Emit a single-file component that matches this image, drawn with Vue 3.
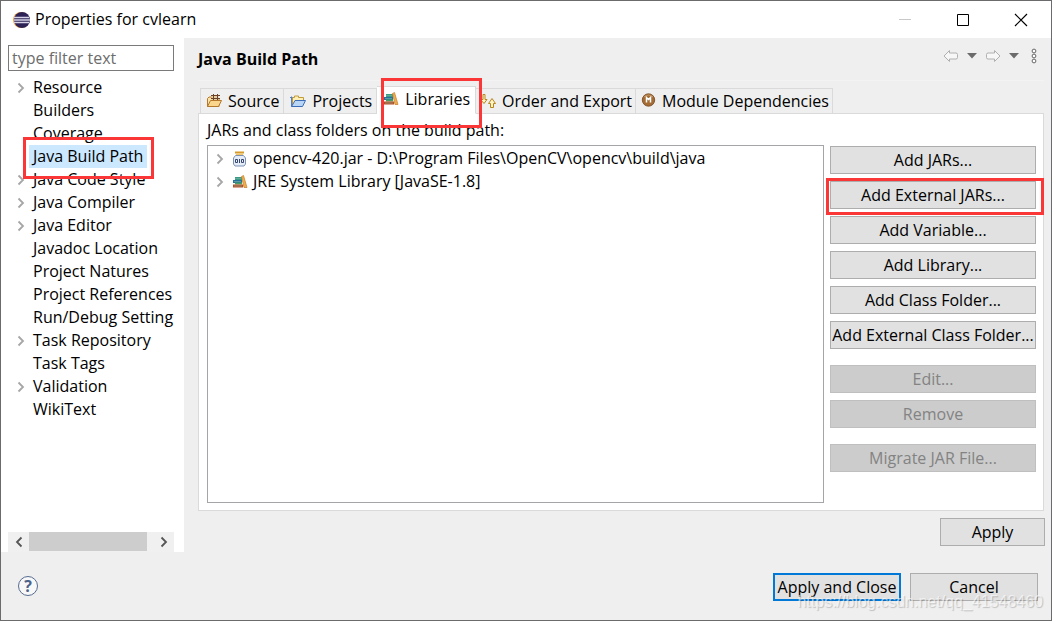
<script setup>
import { ref } from 'vue'

const filter = ref('')
const categories = [
  { label: 'Resource', open: true },
  { label: 'Builders' },
  { label: 'Coverage' },
  { label: 'Java Build Path', selected: true },
  { label: 'Java Code Style', open: true },
  { label: 'Java Compiler', open: true },
  { label: 'Java Editor', open: true },
  { label: 'Javadoc Location' },
  { label: 'Project Natures' },
  { label: 'Project References' },
  { label: 'Run/Debug Setting' },
  { label: 'Task Repository', open: true },
  { label: 'Task Tags' },
  { label: 'Validation', open: true },
  { label: 'WikiText' }
]
const tabs = [
  { label: 'Source', icon: 'source' },
  { label: 'Projects', icon: 'projects' },
  { label: 'Libraries', icon: 'books', selected: true },
  { label: 'Order and Export', icon: 'order' },
  { label: 'Module Dependencies', icon: 'module' }
]
const entries = [
  { label: 'opencv-420.jar - D:\\Program Files\\OpenCV\\opencv\\build\\java', icon: 'jar' },
  { label: 'JRE System Library [JavaSE-1.8]', icon: 'books' }
]
const actions = [
  { label: 'Add JARs...' },
  { label: 'Add External JARs...', marked: true },
  { label: 'Add Variable...' },
  { label: 'Add Library...' },
  { label: 'Add Class Folder...' },
  { label: 'Add External Class Folder...' },
  { label: 'Edit...', disabled: true, spaced: true },
  { label: 'Remove', disabled: true },
  { label: 'Migrate JAR File...', disabled: true, spaced: true }
]
</script>

<template>
  <div class="window">
    <svg class="defs" aria-hidden="true">
      <symbol id="i-source" viewBox="0 0 16 16">
        <path d="M1.500 13.500V5.500L3 4h3l1 1.500h6v8z" fill="#fbe3a6" stroke="#b5782a" />
        <path d="M5.500 2h7v5h-7z" fill="#e6cda4" />
        <path d="M5 2.500h9M5 5.500h9M7.500 1v7M11.500 1v7" fill="none" stroke="#6b4328" />
        <path d="M1.500 13.500l3-6h11l-3 6z" fill="#f9d68b" stroke="#b5782a" />
      </symbol>
      <symbol id="i-projects" viewBox="0 0 16 16">
        <path d="M2.500 13V4.500h2V3h4v1.500h5V8" fill="#fff0b8" stroke="#c29a3a" />
        <path d="M0 4.500h2.500M1.500 3.500v10" fill="none" stroke="#587fbd" />
        <path d="M1.500 13.500l3.500-6h10.500l-3 6z" fill="#b9d5f5" stroke="#3c6cb8" />
      </symbol>
      <symbol id="i-books" viewBox="0 0 16 16">
        <path d="M3 3h7v3H3z" fill="#3a9a86" />
        <path d="M1 6h9v3H1z" fill="#286f99" />
        <path d="M3 8.500h7v2H3z" fill="#48a063" />
        <path d="M1 10.500h10v3H1z" fill="#b84d24" />
        <path d="M3 4.500h6M2 7.500h7M2 12h8" stroke="#7bb9aa" stroke-width=".6" fill="none" />
        <path d="M9.500 2.500l2-1 3.500 12h-3z" fill="#eeb04c" stroke="#c77a28" stroke-width=".7" />
      </symbol>
      <symbol id="i-order" viewBox="0 0 16 16">
        <path d="M3 1.500h2v5h2L4 10.500.5 6.500H3zM10.500 14.500h3v-4h2L12 5.500l-3.500 5h2z" fill="#fff5c9" stroke="#b98519" />
      </symbol>
      <symbol id="i-module" viewBox="0 0 16 16">
        <circle cx="8.500" cy="7" r="6.200" fill="#a56d35" stroke="#74451e" stroke-width=".8" />
        <path d="M4 4Q8.500 0 13 4" fill="none" stroke="#c49a68" />
        <path d="M6.500 9.500v-5l2 2 2-2v5" fill="none" stroke="#fff" stroke-width="1.500" />
      </symbol>
      <symbol id="i-jar" viewBox="0 0 16 16">
        <path d="M3 1.500h9" stroke="#d79b2b" stroke-width="2" />
        <path d="M4 3.500h7" stroke="#f2c767" stroke-width="1.500" />
        <path d="M3.500 4.500h8l2 2.500v6l-1.500 2H3l-1.500-2V7z" fill="#e4edf8" stroke="#7d91b4" />
        <path d="M3.500 8.500h2v3h-2zM7.500 8v4M9.500 8.500h2v3h-2z" fill="none" stroke="#37476c" />
      </symbol>
      <symbol id="i-chevron" viewBox="0 0 8 12">
        <path d="M1.500 1.500L6 6l-4.500 4.500" fill="none" stroke="currentColor" stroke-width="1.800" />
      </symbol>
    </svg>

    <header class="titlebar">
      <svg class="logo" viewBox="0 0 18 18" aria-hidden="true">
        <circle cx="9" cy="9" r="8" fill="#f0a33c" />
        <circle cx="10" cy="9" r="8" fill="#2c2255" />
        <path d="M2 6.500h15M2 9h16M2 11.500h15" stroke="#d6d3e8" stroke-width="1.300" />
      </svg>
      <h1>Properties for cvlearn</h1>
      <div class="controls">
        <button type="button" aria-label="Minimize" disabled><svg viewBox="0 0 14 14"><path d="M1 6.500h12" stroke="#c8c8c8" /></svg></button>
        <button type="button" aria-label="Maximize"><svg viewBox="0 0 14 14"><path d="M1.500 1.500h11v11h-11z" fill="none" stroke="#000" /></svg></button>
        <button type="button" aria-label="Close"><svg viewBox="0 0 14 14"><path d="M1 1l12 12M13 1L1 13" stroke="#000" stroke-width="1.200" /></svg></button>
      </div>
    </header>

    <div class="body">
      <nav class="side">
        <input v-model="filter" class="filter" type="text" placeholder="type filter text" aria-label="Filter" />
        <ul class="tree">
          <li v-for="c in categories" :key="c.label">
            <button v-if="c.open" type="button" class="toggle" :aria-label="'Expand ' + c.label"><svg><use href="#i-chevron" /></svg></button>
            <span v-else class="toggle"></span>
            <a href="#" :class="{ selected: c.selected }">{{ c.label }}</a>
            <span v-if="c.selected" class="mark mark-tree"></span>
          </li>
        </ul>
        <div class="scroll">
          <button type="button" aria-label="Scroll left"><svg class="flip"><use href="#i-chevron" /></svg></button>
          <span class="thumb"></span>
          <button type="button" aria-label="Scroll right"><svg><use href="#i-chevron" /></svg></button>
        </div>
      </nav>

      <main class="page">
        <div class="heading">
          <h2>Java Build Path</h2>
          <div class="history">
            <button type="button" aria-label="Back"><svg viewBox="0 0 16 14"><path d="M1 7l5.500-5.500V4H13q1.500 0 1.500 1.500v3Q14.500 10 13 10H6.500v2.500z" fill="#f7f7f7" stroke="#b0b0b0" /></svg></button>
            <button type="button" aria-label="Back history" class="drop"><svg viewBox="0 0 10 6"><path d="M0 0h10L5 5.500z" fill="#6b6b6b" /></svg></button>
            <button type="button" aria-label="Forward"><svg viewBox="0 0 16 14"><path d="M15 7L9.500 1.500V4H3Q1.500 4 1.500 5.500v3Q1.500 10 3 10h6.500v2.500z" fill="#f7f7f7" stroke="#b0b0b0" /></svg></button>
            <button type="button" aria-label="Forward history" class="drop"><svg viewBox="0 0 10 6"><path d="M0 0h10L5 5.500z" fill="#6b6b6b" /></svg></button>
            <button type="button" aria-label="Menu" class="menu"><svg viewBox="0 0 6 16"><g fill="#fff" stroke="#666"><circle cx="3" cy="3" r="1.900" /><circle cx="3" cy="8" r="1.900" /><circle cx="3" cy="13" r="1.900" /></g></svg></button>
          </div>
        </div>

        <div class="tabs" role="tablist">
          <button v-for="t in tabs" :key="t.label" type="button" role="tab" :aria-selected="!!t.selected" :class="{ active: t.selected }">
            <svg class="icon"><use :href="'#i-' + t.icon" /></svg>
            <span>{{ t.label }}</span>
            <span v-if="t.selected" class="mark mark-tab"></span>
          </button>
        </div>

        <section class="panel">
          <p>JARs and class folders on the build path:</p>
          <div class="columns">
            <ul class="entries">
              <li v-for="e in entries" :key="e.label">
                <button type="button" class="toggle" :aria-label="'Expand ' + e.label"><svg><use href="#i-chevron" /></svg></button>
                <svg class="icon"><use :href="'#i-' + e.icon" /></svg>
                <span>{{ e.label }}</span>
              </li>
            </ul>
            <div class="actions">
              <button v-for="a in actions" :key="a.label" type="button" class="btn" :class="{ spaced: a.spaced }" :disabled="a.disabled">
                {{ a.label }}
                <span v-if="a.marked" class="mark mark-action"></span>
              </button>
            </div>
          </div>
        </section>
        <div class="apply"><button type="button" class="btn">Apply</button></div>
      </main>
    </div>

    <footer class="footer">
      <button type="button" class="help" aria-label="Help">?</button>
      <div class="confirm">
        <button type="button" class="btn primary">Apply and Close</button>
        <button type="button" class="btn">Cancel</button>
      </div>
      <span class="watermark">https://blog.csdn.net/qq_41548460</span>
    </footer>
  </div>
</template>

<style>
body { margin: 0; }
</style>

<style scoped>
* { box-sizing: border-box; }
.window {
  display: flex;
  flex-direction: column;
  min-height: 100vh;
  border: 1px solid #6b6b6d;
  background: #efefef;
  color: #000;
  font: 16px/23px "Open Sans", "Noto Sans", sans-serif;
  white-space: nowrap;
}
.defs { position: absolute; width: 0; height: 0; }
button { margin: 0; padding: 0; border: 0; background: none; color: inherit; font: inherit; }
svg { display: block; flex: none; }
ul { margin: 0; padding: 0; list-style: none; }
h1, h2, p { margin: 0; font-size: 16px; }
.icon { width: 16px; height: 16px; }

.titlebar { display: flex; align-items: center; height: 37px; padding-left: 11px; background: #fff; }
.logo { width: 18px; height: 18px; }
h1 { margin-left: 5px; font-weight: 400; }
.controls { display: flex; margin-left: auto; padding-right: 1px; }
.controls button { display: grid; place-items: center; width: 58px; height: 36px; }
.controls svg { width: 14px; height: 14px; }

.body { display: flex; flex: 1; }
.side { display: flex; flex-direction: column; width: 183px; flex: none; padding: 7px 10px 0 7px; background: #fff; }
.filter { width: 100%; height: 26px; padding: 0 3px; border: 1px solid #7a7a7a; font: inherit; color: #000; background: #fff; }
.filter::placeholder { color: #6d6d6d; opacity: 1; }
.tree { padding-top: 5px; }
.tree li { position: relative; display: flex; height: 23px; }
.toggle { display: grid; place-items: center; width: 21px; height: 23px; padding-left: 5px; color: #a6a6a6; flex: none; }
.toggle svg { width: 8px; height: 12px; }
.tree a { padding: 0 4px; color: inherit; text-decoration: none; }
.tree a.selected { background: #cce8ff; }
.scroll { display: flex; height: 20px; margin-top: auto; background: #f0f0f0; color: #555; }
.scroll button { display: grid; place-items: center; width: 21px; height: 19px; }
.scroll svg { width: 8px; height: 12px; }
.flip { transform: scaleX(-1); }
.thumb { flex: 1; height: 19px; margin-right: 6px; background: #cdcdcd; }

.page { display: flex; flex-direction: column; flex: 1; min-width: 0; padding: 0 7px 0 14px; }
.heading { display: flex; align-items: center; justify-content: space-between; height: 43px; border-bottom: 1px solid #f3f3f3; }
.history { display: flex; align-items: center; height: 16px; margin-bottom: 6px; }
.history svg { width: 16px; height: 14px; }
.history .drop { padding: 0 8px; }
.history .drop svg { width: 10px; height: 6px; }
.history .menu { padding: 0 7px 0 4px; }
.history .menu svg { width: 6px; height: 16px; }

.tabs { display: flex; align-items: flex-end; height: 33px; padding: 0 2px; }
.tabs button { position: relative; display: flex; align-items: center; gap: 6px; height: 26px; padding: 0 4px 0 6px; border: 1px solid #dadada; border-left: 0; }
.tabs button:first-child { border-left: 1px solid #dadada; padding-left: 5px; }
.tabs .active { height: 28px; padding: 0 5px 2px 6px; border-bottom-color: #fff; background: #fff; }
.tabs .active ~ button { padding: 0 3px 0 4px; }
.panel { flex: 1; display: flex; flex-direction: column; padding: 5px 7px 7px 8px; border: 1px solid #dadada; margin-top: -1px; background: #fff; }
.columns { display: flex; flex: 1; gap: 6px; margin-top: 3px; }
.entries { flex: 1; padding-top: 1px; border: 1px solid #a3a5a8; }
.entries li { display: flex; align-items: center; height: 23px; }
.entries .toggle { width: 24px; padding: 0; }
.entries .icon { margin-right: 5px; }
.actions { display: flex; flex-direction: column; gap: 7px; width: 206px; padding-top: 1px; }
.btn { position: relative; height: 28px; border: 1px solid #adadad; background: #e1e1e1; }
.btn.spaced { margin-top: 9px; }
.btn:disabled { border-color: #bfbfbf; background: #ccc; color: #838383; }
.apply { display: flex; justify-content: flex-end; padding: 7px 0 6px; margin-right: -1px; }
.apply .btn { width: 105px; }

.footer { position: relative; display: flex; align-items: flex-start; justify-content: space-between; height: 68px; padding: 21px 13px 0 17px; }
.help { width: 20px; height: 20px; margin-top: 3px; border: 1px solid #566c91; border-radius: 50%; background: #f8f8f8; color: #4c638c; font-size: 16px; font-weight: 700; line-height: 18px; }
.confirm { display: flex; gap: 9px; }
.confirm .btn { width: 128px; }
.btn.primary { border: 2px solid #0078d7; }
.watermark { position: absolute; right: 8px; bottom: 6px; color: rgba(255, 255, 255, .6); font: 16px/24px "Liberation Sans", sans-serif; text-shadow: 1px 1px 1px rgba(0, 0, 0, .2); pointer-events: none; }

.mark { position: absolute; z-index: 2; border: 3px solid #fb3637; pointer-events: none; }
.mark-tree { left: 15px; top: -8px; width: 131px; height: 42px; }
.mark-tab { left: 4px; top: -9px; width: 101px; height: 50px; }
.mark-action { inset: -4px -9px -7px -5px; }
</style>
